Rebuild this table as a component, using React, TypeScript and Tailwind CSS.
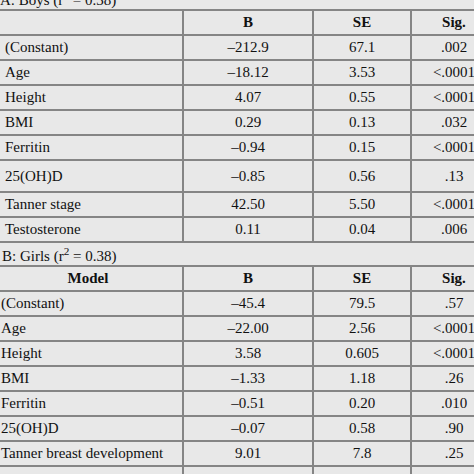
import React from "react";

type Row = { label: string; b: string; se: string; sig: string; h?: string };

const boys: Row[] = [
  { label: "(Constant)", b: "–212.9", se: "67.1", sig: ".002" },
  { label: "Age", b: "–18.12", se: "3.53", sig: "<.0001" },
  { label: "Height", b: "4.07", se: "0.55", sig: "<.0001" },
  { label: "BMI", b: "0.29", se: "0.13", sig: ".032" },
  { label: "Ferritin", b: "–0.94", se: "0.15", sig: "<.0001" },
  { label: "25(OH)D", b: "–0.85", se: "0.56", sig: ".13", h: "h-[32px]" },
  { label: "Tanner stage", b: "42.50", se: "5.50", sig: "<.0001" },
  { label: "Testosterone", b: "0.11", se: "0.04", sig: ".006" },
];

const girls: Row[] = [
  { label: "(Constant)", b: "–45.4", se: "79.5", sig: ".57" },
  { label: "Age", b: "–22.00", se: "2.56", sig: "<.0001" },
  { label: "Height", b: "3.58", se: "0.605", sig: "<.0001" },
  { label: "BMI", b: "–1.33", se: "1.18", sig: ".26" },
  { label: "Ferritin", b: "–0.51", se: "0.20", sig: ".010" },
  { label: "25(OH)D", b: "–0.07", se: "0.58", sig: ".90" },
  { label: "Tanner breast development", b: "9.01", se: "7.8", sig: ".25" },
  { label: "", b: "", se: "", sig: "" },
];

const rowCls =
  "grid grid-cols-[184px_130px_98px_86px] border-b-2 border-[#858585]";
const cellCls = "flex items-center border-r-2 border-[#858585] leading-[17px] whitespace-nowrap";

function Header({ first }: { first: string }) {
  return (
    <div className={`${rowCls} h-[25px] font-bold`}>
      <div className={`${cellCls} justify-center pr-[6px]`}>{first}</div>
      <div className={`${cellCls} justify-center`}>B</div>
      <div className={`${cellCls} justify-center`}>SE</div>
      <div className={`${cellCls} justify-center`}>Sig.</div>
    </div>
  );
}

function Body({ rows, pad }: { rows: Row[]; pad: string }) {
  return (
    <>
      {rows.map((r, i) => (
        <div key={i} className={`${rowCls} ${r.h ?? "h-[25px]"}`}>
          <div className={`${cellCls} ${pad}`}>{r.label}</div>
          <div className={`${cellCls} justify-center`}>{r.b}</div>
          <div className={`${cellCls} justify-center`}>{r.se}</div>
          <div className={`${cellCls} justify-center`}>{r.sig}</div>
        </div>
      ))}
    </>
  );
}

export default function App() {
  return (
    <div className="w-[474px] h-[474px] overflow-hidden bg-[#e8e8e8] text-[15px] text-[#111111] font-['Liberation_Serif','Times_New_Roman',serif]">
      <div className="w-[500px]">
        <div className="-mt-[14px] h-[23px] flex items-end leading-[17px] whitespace-nowrap">
          <span>
            A: Boys (r<sup>2</sup> = 0.38)
          </span>
        </div>
        <div className="border-t-2 border-[#858585]">
          <Header first="" />
          <Body rows={boys} pad="pl-[5px]" />
        </div>
        <div className="h-[22px] flex items-end leading-[17px] whitespace-nowrap pl-[2px]">
          <span>
            B: Girls (r<sup>2</sup> = 0.38)
          </span>
        </div>
        <div className="border-t-2 border-[#858585]">
          <Header first="Model" />
          <Body rows={girls} pad="pl-[1px]" />
        </div>
      </div>
    </div>
  );
}
